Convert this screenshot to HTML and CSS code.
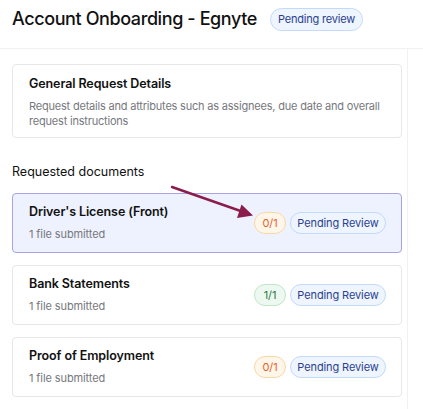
FILE: index.html
```html
<!DOCTYPE html>
<html lang="en">
<head>
<meta charset="utf-8">
<title>Account Onboarding - Egnyte</title>
<link rel="stylesheet" href="styles.css">
</head>
<body>
<div class="page">
  <header class="header">
    <h1 class="title">Account Onboarding - Egnyte</h1>
    <span class="badge">Pending review</span>
  </header>
  <main class="content">
    <section class="card general">
      <h2 class="card-title">General Request Details</h2>
      <p class="card-desc">Request details and attributes such as assignees, due date and overall request instructions</p>
    </section>
    <h3 class="section-title">Requested documents</h3>
    <div class="doc-list">
      <div class="card doc selected">
        <div class="doc-text">
          <div class="doc-title">Driver's License (Front)</div>
          <div class="doc-sub">1 file submitted</div>
        </div>
        <div class="pills">
          <span class="pill count orange">0/1</span>
          <span class="pill status">Pending Review</span>
        </div>
      </div>
      <div class="card doc">
        <div class="doc-text">
          <div class="doc-title">Bank Statements</div>
          <div class="doc-sub">1 file submitted</div>
        </div>
        <div class="pills">
          <span class="pill count green">1/1</span>
          <span class="pill status">Pending Review</span>
        </div>
      </div>
      <div class="card doc">
        <div class="doc-text">
          <div class="doc-title">Proof of Employment</div>
          <div class="doc-sub">1 file submitted</div>
        </div>
        <div class="pills">
          <span class="pill count orange">0/1</span>
          <span class="pill status">Pending Review</span>
        </div>
      </div>
    </div>
  </main>
  <svg class="arrow" width="423" height="409" viewBox="0 0 423 409" aria-hidden="true">
    <line x1="172" y1="187" x2="242" y2="211.5" stroke="#8a1d4c" stroke-width="2.4" stroke-linecap="round"/>
    <polygon points="253,215.5 237,218 241.5,204.5" fill="#8a1d4c"/>
  </svg>
</div>
</body>
</html>
```

FILE: styles.css
```css
* { box-sizing: border-box; }

html, body {
  margin: 0;
  padding: 0;
  background: #ffffff;
}

body {
  font-family: Inter, "Noto Sans", "Liberation Sans", sans-serif;
  color: #111111;
  width: 423px;
  height: 409px;
  overflow: hidden;
}

.page {
  position: relative;
  width: 423px;
  height: 409px;
}

.header {
  height: 49px;
  display: flex;
  align-items: center;
  gap: 13px;
  padding: 0 12px 10px 12px;
  border-bottom: 1px solid #f1f1f1;
}

.title {
  margin: 0;
  font-size: 18px;
  font-weight: 500;
  line-height: 24px;
  color: #111111;
  letter-spacing: -0.4px;
}

.badge {
  display: inline-flex;
  align-items: center;
  height: 23px;
  padding: 0 7px;
  border: 1px solid #c3dafc;
  background: #eef5ff;
  color: #2a3f8f;
  border-radius: 12px;
  font-size: 11px;
  letter-spacing: -0.2px;
  line-height: 1;
}

.content {
  width: 408px;
  height: 360px;
  padding: 15px 5px 0 12px;
  border-right: 1px solid #f1f1f1;
}

.card {
  border: 1px solid #e6e7ea;
  border-radius: 4px;
  background: #ffffff;
}

.general {
  padding: 10px 16px 8px 16px;
  height: 74px;
}

.card-title {
  margin: 0;
  font-size: 12.5px;
  font-weight: 600;
  line-height: 18px;
  letter-spacing: -0.1px;
  color: #111111;
}

.card-desc {
  margin: 6px 0 0 0;
  font-size: 11px;
  line-height: 15px;
  letter-spacing: -0.2px;
  color: #76787d;
}

.section-title {
  margin: 25px 0 12px 0;
  font-size: 12.5px;
  font-weight: 400;
  line-height: 18px;
  color: #111111;
}

.doc-list {
  display: flex;
  flex-direction: column;
  gap: 12px;
}

.doc {
  height: 60px;
  display: flex;
  align-items: center;
  justify-content: space-between;
  padding: 0 15px 0 16px;
}

.doc.selected {
  background: #eef2fe;
  border-color: #a7a3e6;
}

.doc-text {
  display: flex;
  flex-direction: column;
  gap: 5px;
  padding-bottom: 2px;
}

.doc-title {
  font-size: 12.5px;
  font-weight: 600;
  line-height: 18px;
  letter-spacing: -0.1px;
  color: #111111;
}

.doc-sub {
  font-size: 11px;
  line-height: 16px;
  letter-spacing: -0.1px;
  color: #76787d;
}

.pills {
  display: flex;
  gap: 4px;
  align-items: center;
}

.pill {
  display: inline-flex;
  align-items: center;
  justify-content: center;
  height: 22px;
  border-radius: 11px;
  border: 1px solid;
  font-size: 11px;
  letter-spacing: -0.1px;
  line-height: 1;
}

.count {
  width: 32px;
}

.orange {
  background: #fff6ea;
  border-color: #fbd7a8;
  color: #e5622a;
}

.green {
  background: #edf9f0;
  border-color: #bfe6c9;
  color: #2c7a45;
}

.status {
  width: 96px;
  background: #eef5ff;
  border-color: #c3dafc;
  color: #2a3f8f;
}

.arrow {
  position: absolute;
  left: 0;
  top: 0;
  pointer-events: none;
}
```
